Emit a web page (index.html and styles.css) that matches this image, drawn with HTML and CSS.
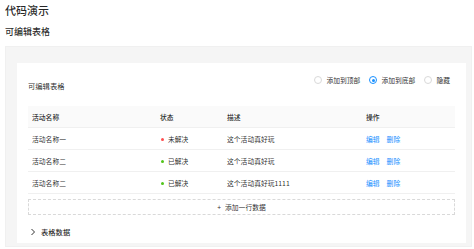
FILE: index.html
```
<!DOCTYPE html>
<html lang="zh-CN">
<head>
  <meta charset="UTF-8">
  <meta name="viewport" content="width=device-width, initial-scale=1.0">
  <title>代码演示</title>
  <link rel="stylesheet" href="styles.css">
</head>
<body>

  <h1 class="page-title">代码演示</h1>
  <h2 class="demo-title">可编辑表格</h2>

  <!-- Demo preview area -->
  <div class="demo-box">
    <div class="card">
      <div class="toolbar">
        <div class="card-title">可编辑表格</div>
        <div class="radio-group">
          <label class="radio"><span class="radio-dot"></span>添加到顶部</label>
          <label class="radio checked"><span class="radio-dot"></span>添加到底部</label>
          <label class="radio"><span class="radio-dot"></span>隐藏</label>
        </div>
      </div>

      <table class="edit-table">
        <colgroup>
          <col class="col-name">
          <col class="col-state">
          <col class="col-desc">
          <col class="col-action">
        </colgroup>
        <thead>
          <tr>
            <th>活动名称</th>
            <th>状态</th>
            <th>描述</th>
            <th>操作</th>
          </tr>
        </thead>
        <tbody>
          <tr>
            <td>活动名称一</td>
            <td><span class="badge red"></span>未解决</td>
            <td>这个活动真好玩</td>
            <td><a class="link">编辑</a><a class="link">删除</a></td>
          </tr>
          <tr>
            <td>活动名称二</td>
            <td><span class="badge green"></span>已解决</td>
            <td>这个活动真好玩</td>
            <td><a class="link">编辑</a><a class="link">删除</a></td>
          </tr>
          <tr>
            <td>活动名称二</td>
            <td><span class="badge green"></span>已解决</td>
            <td>这个活动真好玩1111</td>
            <td><a class="link">编辑</a><a class="link">删除</a></td>
          </tr>
        </tbody>
      </table>

      <button class="add-row" type="button"><span class="plus">+</span>添加一行数据</button>

      <div class="collapse">
        <svg class="arrow" width="6" height="8" viewBox="0 0 6 8"><path d="M1.5 1 L4.5 4 L1.5 7" fill="none" stroke="#333" stroke-width="1"/></svg>
        <span>表格数据</span>
      </div>
    </div>
  </div>

</body>
</html>
```

FILE: styles.css
```
/* General body styles */
body {
  font-family: "Noto Sans CJK SC", "Noto Sans", sans-serif;
  color: rgba(0, 0, 0, 0.85);
  background-color: #fff;
  margin: 0;
  padding: 0 0 0 5px;
}

/* Headings */
.page-title {
  font-size: 11px;
  font-weight: 500;
  line-height: 14px;
  margin: 3px 0 0 0;
}

.demo-title {
  font-size: 9px;
  font-weight: 500;
  line-height: 12px;
  margin: 9px 0 0 0;
}

/* Demo box */
.demo-box {
  margin-top: 8px;
  width: 467px;
  background-color: #f5f5f5;
  border: 1px solid #f0f0f0;
  box-sizing: border-box;
  padding: 16px 5px 3px 11px;
}

.card {
  background-color: #fff;
  padding: 0 11px 6px 11px;
}

/* Toolbar */
.toolbar {
  display: flex;
  justify-content: space-between;
  height: 43px;
}

.card-title {
  font-size: 7.3px;
  line-height: 10px;
  padding-top: 18px;
}

.radio-group {
  display: flex;
  padding-top: 12px;
  padding-right: 5px;
  height: 10px;
}

.radio {
  display: flex;
  align-items: center;
  font-size: 6.8px;
  line-height: 10px;
  margin-left: 9px;
}

.radio-dot {
  width: 6px;
  height: 6px;
  border: 1px solid #d9d9d9;
  border-radius: 50%;
  margin-right: 4px;
  position: relative;
}

.radio.checked .radio-dot {
  border-color: #1890ff;
}

.radio.checked .radio-dot::after {
  content: "";
  position: absolute;
  left: 1.5px;
  top: 1.5px;
  width: 3px;
  height: 3px;
  border-radius: 50%;
  background-color: #1890ff;
}

/* Table */
.edit-table {
  width: 100%;
  border-collapse: collapse;
  table-layout: fixed;
  font-size: 6.8px;
}

.col-name { width: 128px; }
.col-state { width: 67px; }
.col-desc { width: 139px; }

.edit-table th {
  background-color: #fafafa;
  font-weight: 500;
  text-align: left;
  height: 21px;
  padding: 0 4px;
  border-bottom: 1px solid #f0f0f0;
}

.edit-table td {
  height: 21px;
  padding: 0 4px;
  border-bottom: 1px solid #f0f0f0;
}

.badge {
  display: inline-block;
  width: 3px;
  height: 3px;
  border-radius: 50%;
  margin: 0 4px 1px 1px;
  vertical-align: middle;
}

.badge.red { background-color: #ff4d4f; }
.badge.green { background-color: #52c41a; }

.link {
  color: #1890ff;
  margin-right: 7px;
}

/* Add row button */
.add-row {
  display: block;
  width: 100%;
  height: 16px;
  margin-top: 5px;
  border: 1px dashed #d9d9d9;
  background-color: #fff;
  font-family: inherit;
  font-size: 6.8px;
  color: rgba(0, 0, 0, 0.85);
  padding: 0;
}

.plus {
  margin-right: 4px;
}

/* Collapse */
.collapse {
  display: flex;
  align-items: center;
  margin-top: 12px;
  padding-left: 2px;
  font-size: 7.3px;
  font-weight: 500;
  line-height: 10px;
}

.arrow {
  margin-right: 5px;
}
```
